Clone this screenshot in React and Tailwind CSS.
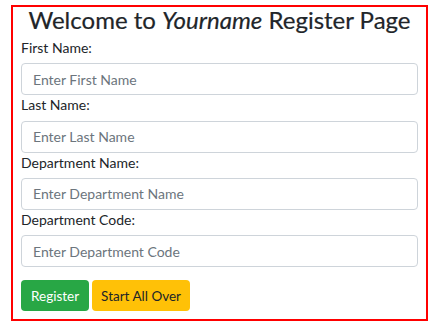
import { useState } from 'react';

// Simple register form, Bootstrap-ish look.
const fields = [
  { id: 'firstName', label: 'First Name:', placeholder: 'Enter First Name' },
  { id: 'lastName', label: 'Last Name:', placeholder: 'Enter Last Name' },
  { id: 'deptName', label: 'Department Name:', placeholder: 'Enter Department Name' },
  { id: 'deptCode', label: 'Department Code:', placeholder: 'Enter Department Code' },
];

const App = () => {
  const [values, setValues] = useState({});

  const update = (id, v) => setValues(prev => ({ ...prev, [id]: v }));

  return (
    <div className="pt-[5px] pl-[11px] w-[442px] h-[331px] bg-white font-['Lato',sans-serif] text-[#212529]">
      <div className="w-[417px] h-[316px] border-2 border-[#ff0000] px-[8px] pt-[2px]">
        <h2 className="text-center text-[24px] leading-[21px] font-normal whitespace-nowrap [-webkit-text-stroke:0.2px_#212529]">
          Welcome to <i>Yourname</i> Register Page
        </h2>

        <form className="mt-[8px]" onSubmit={(e) => e.preventDefault()}>
          {fields.map(f => (
            <div key={f.id}>
              <label htmlFor={f.id} className="block text-[14px] leading-[20.33px] mb-[5px]">
                {f.label}
              </label>
              <input
                id={f.id}
                value={values[f.id] || ''}
                onChange={(e) => update(f.id, e.target.value)}
                placeholder={f.placeholder}
                className="block w-full h-[32px] px-[11px] text-[14px] rounded-[4px] border border-[#ced4da] placeholder:text-[#6c757d] outline-none"
              />
            </div>
          ))}

          <div className="flex gap-[3px] mt-[13px]">
            <button type="submit" className="h-[31px] px-[10px] rounded-[4px] bg-[#28a745] text-white text-[13.5px]">
              Register
            </button>
            <button type="reset" onClick={() => setValues({})} className="h-[31px] px-[9px] rounded-[4px] bg-[#ffc107] text-[#212529] text-[13.5px]">
              Start All Over
            </button>
          </div>
        </form>
      </div>
    </div>
  );
};

export default App;
